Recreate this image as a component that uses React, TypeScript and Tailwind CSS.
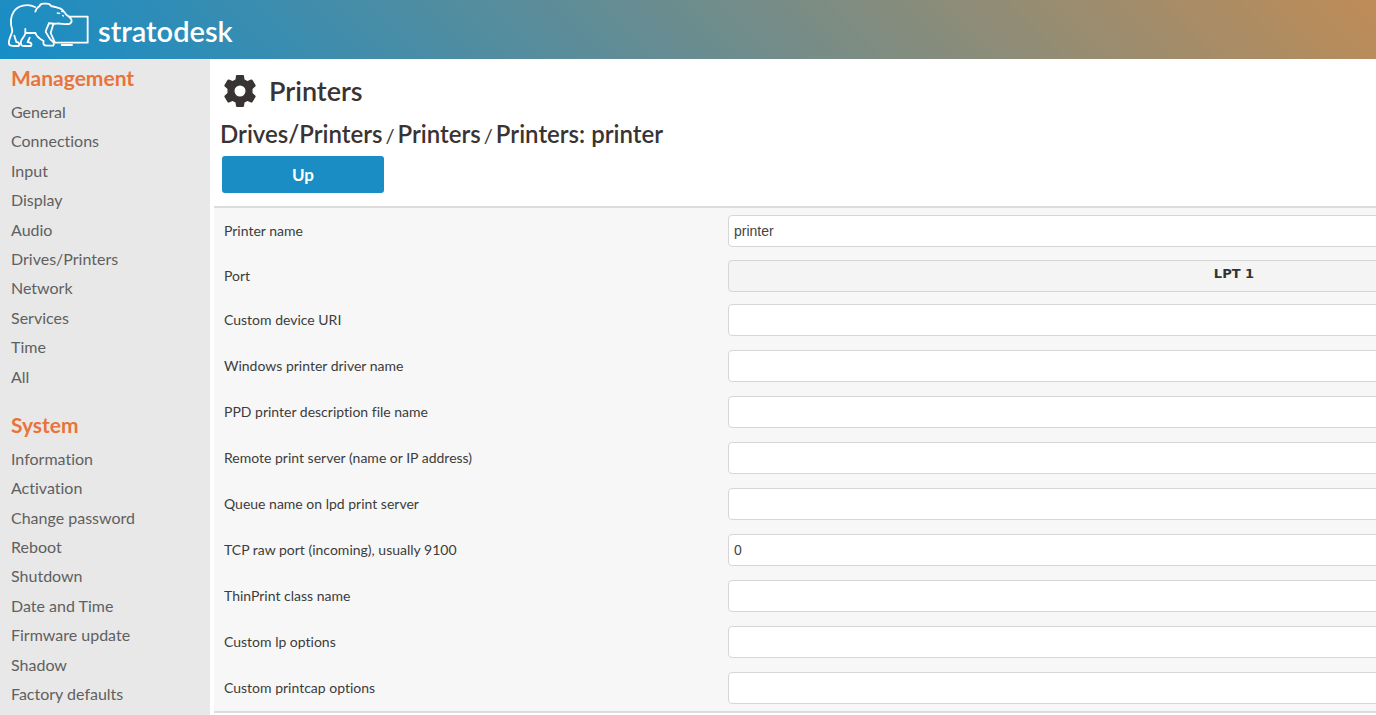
import React, { useState } from 'react';

interface MenuSection {
  title: string;
  items: string[];
}

interface Field {
  id: string;
  label: string;
  value?: string;
  options?: string[];
}

const MENU: MenuSection[] = [
  {
    title: 'Management',
    items: ['General', 'Connections', 'Input', 'Display', 'Audio', 'Drives/Printers', 'Network', 'Services', 'Time', 'All'],
  },
  {
    title: 'System',
    items: [
      'Information',
      'Activation',
      'Change password',
      'Reboot',
      'Shutdown',
      'Date and Time',
      'Firmware update',
      'Shadow',
      'Factory defaults',
    ],
  },
];

const BREADCRUMBS = ['Drives/Printers', 'Printers', 'Printers: printer'];

const FIELDS: Field[] = [
  { id: 'name', label: 'Printer name', value: 'printer' },
  { id: 'port', label: 'Port', value: 'LPT 1', options: ['LPT 1'] },
  { id: 'uri', label: 'Custom device URI' },
  { id: 'driver', label: 'Windows printer driver name' },
  { id: 'ppd', label: 'PPD printer description file name' },
  { id: 'server', label: 'Remote print server (name or IP address)' },
  { id: 'queue', label: 'Queue name on lpd print server' },
  { id: 'tcp', label: 'TCP raw port (incoming), usually 9100', value: '0' },
  { id: 'thinprint', label: 'ThinPrint class name' },
  { id: 'lp', label: 'Custom lp options' },
  { id: 'printcap', label: 'Custom printcap options' },
];

const BearLogo: React.FC = () => (
  <svg
    viewBox="0 0 276 150"
    className="w-[92px] h-[50px] shrink-0"
    fill="none"
    stroke="#fff"
    strokeWidth="5.5"
    strokeLinecap="round"
    strokeLinejoin="round"
    aria-hidden="true"
  >
    {/* back and rump */}
    <path d="M105 21C82 9 53 17 42 34C29 53 31 72 37 92C36 104 24 119 27 132C28 138 35 138 45 138H56C60 131 57 127 49 126L43 107" />
    {/* hind leg and belly */}
    <path d="M76 87V99H106M76 99C76 110 65 114 63 124C61 134 64 138 72 138H93C98 131 92 127 83 126L89 113" />
    {/* front leg and chest */}
    <path d="M106 99C110 111 120 117 131 123C128 132 131 137 141 137H160C165 131 160 125 153 120C145 112 143 103 137 96C138 86 144 79 147 70" />
    {/* head */}
    <path d="M106 35C108 26 114 21 119 18C120 12 129 10 136 11C145 10 151 13 153 18C163 19 171 24 180 25C190 28 193 38 200 45C208 50 216 55 215 64C213 71 209 73 203 72C193 74 180 69 169 71C160 72 153 69 147 70" />
    <path d="M172 39L179 40M185 34L187 35M188 46L190 48" strokeWidth="4" />
    {/* display */}
    <path d="M208 50H263V128H167M160 72L152 99L164 126" />
    <path d="M185 135H216" />
  </svg>
);

const Sidebar: React.FC = () => (
  <nav className="w-[210px] shrink-0 bg-[#e8e8e8] pl-[11px] pt-[7px]">
    {MENU.map((section) => (
      <section key={section.title} className="mb-[25px]">
        <h2 className="text-[21px] leading-6 font-bold text-[#e8743b]">{section.title}</h2>
        <ul className="mt-[11px] flex flex-col gap-[7px]">
          {section.items.map((item) => (
            <li key={item} className="text-[16px] leading-[1.4] text-[#606060]">
              <a href="#" className="block">{item}</a>
            </li>
          ))}
        </ul>
      </section>
    ))}
  </nav>
);

const FieldRow: React.FC<{ field: Field }> = ({ field }) => {
  const [value, setValue] = useState(field.value ?? '');

  return (
    <div className={`grid grid-cols-[504px_minmax(1012px,1fr)] items-center ${field.options ? 'h-[43px]' : 'h-[46px]'}`}>
      <label htmlFor={field.id} className="text-[14px] leading-5 text-[#3c3c3c]">
        {field.label}
      </label>
      {field.options ? (
        <select
          id={field.id}
          value={value}
          onChange={(e) => setValue(e.target.value)}
          className="h-8 w-full appearance-none rounded border border-[#d6d6d6] bg-[#f4f4f4] pb-1 text-center font-['DejaVu_Sans',sans-serif] text-[13px] font-bold text-[#333]"
        >
          {field.options.map((option) => (
            <option key={option}>{option}</option>
          ))}
        </select>
      ) : (
        <input
          id={field.id}
          type="text"
          value={value}
          onChange={(e) => setValue(e.target.value)}
          className="h-8 w-full rounded border border-[#d6d6d6] bg-white px-[5px] font-['Liberation_Sans',Arial,sans-serif] text-[14px] text-[#444]"
        />
      )}
    </div>
  );
};

const App: React.FC = () => (
  <div className="flex min-h-screen flex-col overflow-hidden bg-white font-[Lato,sans-serif] [font-variant-ligatures:none]">
    <header className="flex h-[59px] items-start bg-linear-[45deg,#168dc7,#bf8c57] pr-4">
      <BearLogo />
      <span className="ml-[6px] mt-[11px] text-[29px] leading-10 font-semibold text-white">stratodesk</span>
    </header>

    <div className="flex flex-1">
      <Sidebar />

      <main className="min-w-0 flex-1 overflow-hidden pl-1">
        <div className="flex items-center gap-3 pl-[9px] pt-[15px]">
          <svg viewBox="0 0 34 34" className="size-[34px]" fill="#3a3333" aria-hidden="true">
            <path
              fillRule="evenodd"
              d="M13 1.500Q13 1 14 1H20Q21 1 21 2L21.500 5.500L24.500 7L28 5.500Q29 5.200 29.500 6L32.500 11Q33 12 32.200 12.600L29.500 15V19L32.200 21.400Q33 22 32.500 23L29.500 28Q29 28.800 28 28.500L24.500 27L21.500 28.500L21 32Q21 33 20 33H14Q13 33 13 32L12.500 28.500L9.500 27L6 28.500Q5 28.800 4.500 28L1.500 23Q1 22 1.800 21.400L4.500 19V15L1.800 12.600Q1 12 1.500 11L4.500 6Q5 5.200 6 5.500L9.500 7L12.500 5.500ZM17 11.500A5.500 5.500 0 1 0 17 22.500A5.500 5.500 0 1 0 17 11.500Z"
            />
          </svg>
          <h1 className="text-[27px] leading-8 font-semibold text-[#3a3333]">Printers</h1>
        </div>

        <ol className="mt-3 flex items-baseline gap-[3px] pl-[6px] text-[24px] leading-7 text-[#3a3333]">
          {BREADCRUMBS.map((crumb, i) => (
            <li key={crumb} className="flex items-baseline gap-[3px]">
              {i > 0 && <span className="text-[20px]">/</span>}
              <span className="font-semibold">{crumb}</span>
            </li>
          ))}
        </ol>

        <button className="ml-2 mt-[7px] h-[37px] w-[162px] rounded-[3px] bg-[#1a8dc4] text-[17px] font-bold text-white">Up</button>

        <form className="mt-[13px] border-y-2 border-[#dcdcdc] bg-[#f7f7f7] pl-[10px]">
          {FIELDS.map((field) => (
            <FieldRow key={field.id} field={field} />
          ))}
        </form>
      </main>
    </div>
  </div>
);

export default App;
